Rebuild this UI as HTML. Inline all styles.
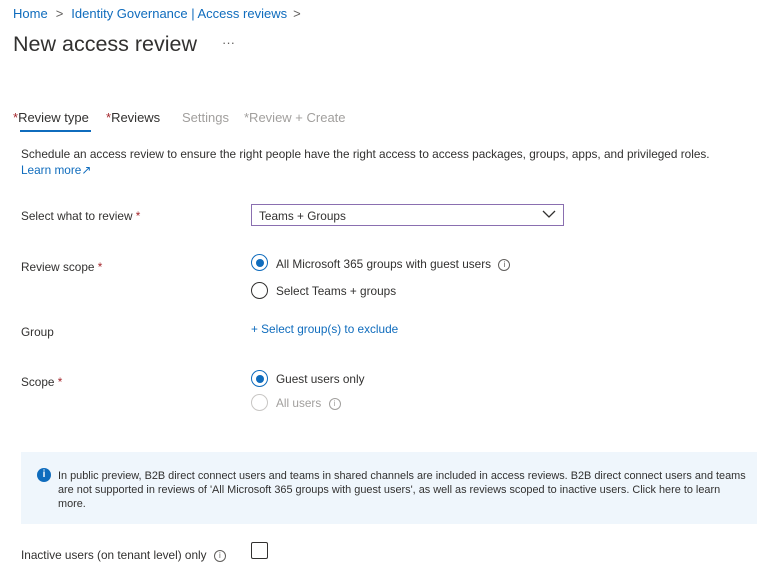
<!DOCTYPE html>
<html><head><meta charset="utf-8"><style>
body{margin:0;width:768px;height:585px;background:#fff;font-family:"Liberation Sans",sans-serif;color:#323130;position:relative;overflow:hidden}
.a{position:absolute;white-space:nowrap}
.blue{color:#0f6cbd}
.req{color:#a4262c}
.radio{position:absolute;width:17px;height:17px;border:1px solid #323130;border-radius:50%;box-sizing:border-box}
.radio.on{border-color:#0f6cbd}
.radio.on::after{content:"";position:absolute;left:3.5px;top:3.5px;width:8px;height:8px;border-radius:50%;background:#0f6cbd}
.info{display:inline-block;width:10px;height:10px;border:1px solid #605e5c;border-radius:50%;font-size:8px;line-height:10px;text-align:center;color:#605e5c;vertical-align:1px;margin-left:4px}
</style></head><body>
<div class="a blue" style="left:13px;top:6px;font-size:13px">Home<span style="color:#605e5c;margin:0 8px">&gt;</span>Identity Governance | Access reviews<span style="color:#605e5c;margin-left:6px">&gt;</span></div>
<div class="a" style="left:13px;top:32px;font-size:21.5px;color:#323130">New access review</div>
<div class="a" style="left:222px;top:35px;font-size:13px;color:#605e5c">···</div>

<div class="a" style="left:13px;top:110px;font-size:13px"><span class="req">*</span>Review type</div>
<div style="position:absolute;left:20px;top:130px;width:71px;height:2px;background:#0f6cbd"></div>
<div class="a" style="left:106px;top:110px;font-size:13px"><span class="req">*</span>Reviews</div>
<div class="a" style="left:182px;top:110px;font-size:13px;color:#a19f9d">Settings</div>
<div class="a" style="left:244px;top:110px;font-size:13px;color:#a19f9d">*Review + Create</div>

<div class="a" style="left:21px;top:147px;font-size:11.8px">Schedule an access review to ensure the right people have the right access to access packages, groups, apps, and privileged roles.</div>
<div class="a blue" style="left:21px;top:163px;font-size:11.8px">Learn more&#8599;</div>

<div class="a" style="left:21px;top:209px;font-size:11.8px">Select what to review <span class="req">*</span></div>
<div style="position:absolute;left:251px;top:204px;width:313px;height:22px;border:1px solid #8a6fb0;box-sizing:border-box"></div>
<div class="a" style="left:259px;top:209px;font-size:11.8px">Teams + Groups</div>
<svg style="position:absolute;left:542px;top:210px" width="14" height="9"><path d="M1 1l6 6 6-6" fill="none" stroke="#323130" stroke-width="1.3"/></svg>

<div class="a" style="left:21px;top:260px;font-size:11.8px">Review scope <span class="req">*</span></div>
<div class="radio on" style="left:251px;top:254px"></div>
<div class="a" style="left:276px;top:257px;font-size:11.8px">All Microsoft 365 groups with guest users <span class="info">i</span></div>
<div class="radio" style="left:251px;top:282px"></div>
<div class="a" style="left:276px;top:284px;font-size:11.8px">Select Teams + groups</div>

<div class="a" style="left:21px;top:325px;font-size:11.8px">Group</div>
<div class="a blue" style="left:251px;top:322px;font-size:11.8px">+ Select group(s) to exclude</div>

<div class="a" style="left:21px;top:375px;font-size:11.8px">Scope <span class="req">*</span></div>
<div class="radio on" style="left:251px;top:370px"></div>
<div class="a" style="left:276px;top:372px;font-size:11.8px">Guest users only</div>
<div class="radio" style="left:251px;top:394px;border-color:#c8c6c4"></div>
<div class="a" style="left:276px;top:396px;font-size:11.8px;color:#a19f9d">All users <span class="info" style="border-color:#a19f9d;color:#a19f9d">i</span></div>

<div style="position:absolute;left:21px;top:452px;width:736px;height:72px;background:#eff6fc"></div>
<div style="position:absolute;left:37px;top:468px;width:14px;height:14px;border-radius:50%;background:#0f6cbd;color:#fff;font-size:10px;font-weight:bold;text-align:center;line-height:14px">i</div>
<div class="a" style="left:58px;top:469px;font-size:10.9px;line-height:14px">In public preview, B2B direct connect users and teams in shared channels are included in access reviews. B2B direct connect users and teams<br>are not supported in reviews of 'All Microsoft 365 groups with guest users', as well as reviews scoped to inactive users. Click here to learn<br>more.</div>

<div class="a" style="left:21px;top:548px;font-size:11.8px">Inactive users (on tenant level) only <span class="info">i</span></div>
<div style="position:absolute;left:251px;top:542px;width:17px;height:17px;border:1px solid #323130;border-radius:2px;box-sizing:border-box"></div>
</body></html>
